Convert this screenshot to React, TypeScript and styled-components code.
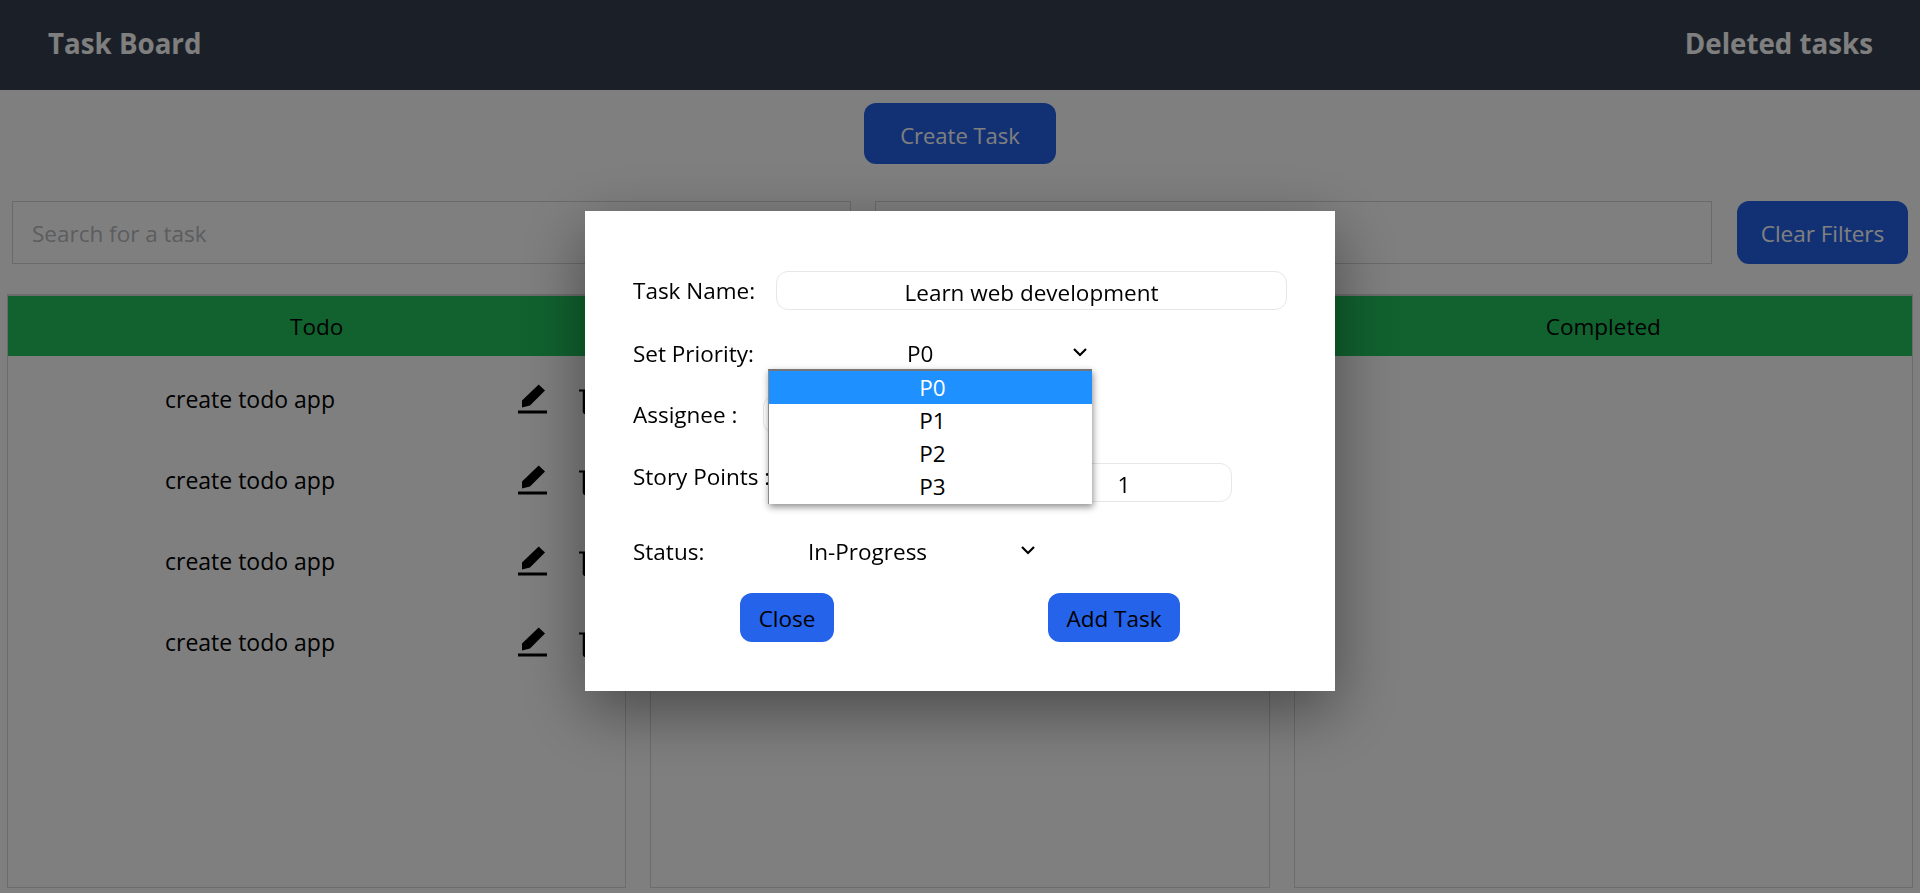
import React from "react";
import styled, { createGlobalStyle } from "styled-components";

const Global = createGlobalStyle`
  html, body { margin: 0; padding: 0; height: 100%; background: #fff; }
  * { box-sizing: border-box; }
  body { font-family: "Open Sans", "Noto Sans", sans-serif; font-size: 22.5px; color: #000; overflow: hidden; }
`;

const Page = styled.div`
  width: 1920px;
  height: 893px;
  display: flex;
  flex-direction: column;
`;
const Header = styled.header`
  height: 90px;
  flex: none;
  background: #374151;
  color: #fff;
  display: flex;
  align-items: center;
  justify-content: space-between;
  padding: 0 47px 4px 48px;
`;
const Brand = styled.span`
  font-size: 27.700px;
  font-weight: 700;
`;
const CreateRow = styled.div`
  display: flex;
  justify-content: center;
  padding-top: 13px;
`;
const PrimaryButton = styled.button<{ $w: number; $h: number; $size?: number }>`
  width: ${(p) => p.$w}px;
  height: ${(p) => p.$h}px;
  border: none;
  border-radius: 12px;
  background: #2563eb;
  color: #fff;
  font-family: inherit;
  font-size: ${(p) => p.$size || 22.5}px;
  padding: 2px 0 0;
  justify-self: end;
`;
const Filters = styled.div`
  display: grid;
  grid-template-columns: 839px 837px 172px;
  column-gap: 24px;
  padding: 0 12px;
  margin-top: 37px;
  height: 63px;
`;
const SearchInput = styled.input`
  border: 1px solid #d1d5db;
  background: #fff;
  font: inherit;
  padding: 2px 19px 0;
  height: 63px;
  &::placeholder { color: #b8bac0; opacity: 1; }
`;
const Board = styled.div`
  display: grid;
  grid-template-columns: repeat(3, 1fr);
  column-gap: 24px;
  padding: 0 7px;
  margin-top: 30px;
  height: 594px;
`;
const Column = styled.section`
  border: 1px solid #d9d9d9;
  border-top-width: 2px;
  display: flex;
  flex-direction: column;
  min-width: 0;
`;
const ColumnTitle = styled.div`
  height: 60px;
  flex: none;
  background: #22c55e;
  display: flex;
  align-items: center;
  justify-content: center;
`;
const CardList = styled.div`
  display: flex;
  flex-direction: column;
  padding-top: 6px;
`;
const Card = styled.div`
  height: 81px;
  display: flex;
  align-items: center;
  padding-bottom: 8px;
`;
const CardText = styled.span`
  width: 484px;
  flex: none;
  text-align: center;
  font-size: 23px;
`;
const IconRow = styled.div`
  display: flex;
  align-items: center;
  gap: 31px;
  margin-left: 26px;
`;
const Overlay = styled.div`
  position: fixed;
  inset: 0;
  background: rgba(0, 0, 0, 0.5);
  display: flex;
  justify-content: center;
  align-items: flex-start;
  padding-top: 211px;
`;
const Modal = styled.form`
  position: relative;
  width: 750px;
  height: 480px;
  background: #fff;
  padding: 60px 48px 49px;
  box-shadow: 0 20px 60px rgba(0, 0, 0, 0.42);
  display: flex;
  flex-direction: column;
`;
const Row = styled.div<{ $top: number; $align?: string }>`
  display: flex;
  align-items: ${(p) => p.$align || "center"};
  height: 39px;
  flex: none;
  margin-top: ${(p) => p.$top}px;
`;
const Label = styled.label<{ $w: number }>`
  width: ${(p) => p.$w}px;
  flex: none;
  line-height: 28px;
  white-space: nowrap;
`;
const TextField = styled.input<{ $w: number }>`
  width: ${(p) => p.$w}px;
  height: 39px;
  border: 1px solid #e5e7eb;
  border-radius: 12px;
  background: #fff;
  font: inherit;
  color: #000;
  text-align: center;
  padding: 4px 8px 0;
`;
const SelectBox = styled.div<{ $w: number; $pad: number }>`
  width: ${(p) => p.$w}px;
  height: 39px;
  display: flex;
  align-items: center;
  justify-content: space-between;
  padding: 0 4px 0 ${(p) => p.$pad}px;
  svg { margin-bottom: 3px; }
`;
const OptionList = styled.ul`
  position: absolute;
  left: 183px;
  top: 158px;
  width: 324px;
  height: 135px;
  margin: 0;
  padding: 0;
  list-style: none;
  background: #fff;
  border-top: 2px solid #767676;
  border-left: 1px solid #8a8a8a;
  box-shadow: 1px 3px 7px rgba(0, 0, 0, 0.45);
`;
const OptionItem = styled.li<{ $active?: boolean }>`
  height: 33px;
  line-height: 33px;
  text-align: center;
  padding-left: 4px;
  background: ${(p) => (p.$active ? "#1e90ff" : "#fff")};
  color: ${(p) => (p.$active ? "#fff" : "#000")};
`;
const Actions = styled.div`
  display: flex;
  margin-top: 22px;
  padding-left: 107px;
  gap: 214px;
`;
const ModalButton = styled.button<{ $w: number }>`
  width: ${(p) => p.$w}px;
  height: 49px;
  border: none;
  border-radius: 12px;
  background: #2563eb;
  color: #000;
  font: inherit;
  padding: 2px 0 0;
`;

const Pen = () => (
  <svg width="30" height="30" viewBox="0 0 30 30" aria-hidden="true">
    <path d="M20.700 0.500L27 6.500L12 21.500L4 23.500V16.500z" fill="#000" />
    <rect x="0" y="26.500" width="29" height="3" fill="#000" />
  </svg>
);
const Trash = () => (
  <svg width="26" height="30" viewBox="0 0 26 30" aria-hidden="true" fill="none" stroke="#000">
    <path strokeWidth="2" d="M0 6.500h26M9 6.500V3h8v3.500" />
    <path strokeWidth="2.500" d="M5 6.500V27.500q0 1.500 2 1.500h12q2 0 2-1.500V6.500" />
  </svg>
);
const Chevron = () => (
  <svg width="16" height="16" viewBox="0 0 16 16" aria-hidden="true" fill="none" stroke="#000" strokeWidth="2.200">
    <path d="M2 5l6 6 6-6" />
  </svg>
);

const todoCards = ["create todo app", "create todo app", "create todo app", "create todo app"];

export default function App() {
  return (
    <Page>
      <Global />
      <Header>
        <Brand>Task Board</Brand>
        <Brand>Deleted tasks</Brand>
      </Header>
      <CreateRow>
        <PrimaryButton $w={192} $h={61} $size={22}>Create Task</PrimaryButton>
      </CreateRow>
      <Filters>
        <SearchInput placeholder="Search for a task" />
        <SearchInput placeholder="Search by assignee" />
        <PrimaryButton $w={171} $h={63}>Clear Filters</PrimaryButton>
      </Filters>
      <Board>
        <Column>
          <ColumnTitle>Todo</ColumnTitle>
          <CardList>
            {todoCards.map((t, i) => (
              <Card key={i}>
                <CardText>{t}</CardText>
                <IconRow>
                  <Pen />
                  <Trash />
                </IconRow>
              </Card>
            ))}
          </CardList>
        </Column>
        <Column>
          <ColumnTitle>In Progress</ColumnTitle>
        </Column>
        <Column>
          <ColumnTitle>Completed</ColumnTitle>
        </Column>
      </Board>
      <Overlay>
        <Modal>
          <Row $top={0}>
            <Label $w={143}>Task Name:</Label>
            <TextField $w={511} defaultValue="Learn web development" />
          </Row>
          <Row $top={24}>
            <Label $w={135}>Set Priority:</Label>
            <SelectBox $w={324} $pad={139}>
              <span>P0</span>
              <Chevron />
            </SelectBox>
          </Row>
          <Row $top={22}>
            <Label $w={130}>Assignee :</Label>
            <TextField $w={300} />
          </Row>
          <Row $top={29} $align="flex-start">
            <Label $w={383}>Story Points :</Label>
            <TextField $w={216} defaultValue="1" />
          </Row>
          <Row $top={30}>
            <Label $w={142}>Status:</Label>
            <SelectBox $w={265} $pad={33}>
              <span>In-Progress</span>
              <Chevron />
            </SelectBox>
          </Row>
          <Actions>
            <ModalButton $w={94}>Close</ModalButton>
            <ModalButton $w={132}>Add Task</ModalButton>
          </Actions>
          <OptionList>
            <OptionItem $active>P0</OptionItem>
            <OptionItem>P1</OptionItem>
            <OptionItem>P2</OptionItem>
            <OptionItem>P3</OptionItem>
          </OptionList>
        </Modal>
      </Overlay>
    </Page>
  );
}
